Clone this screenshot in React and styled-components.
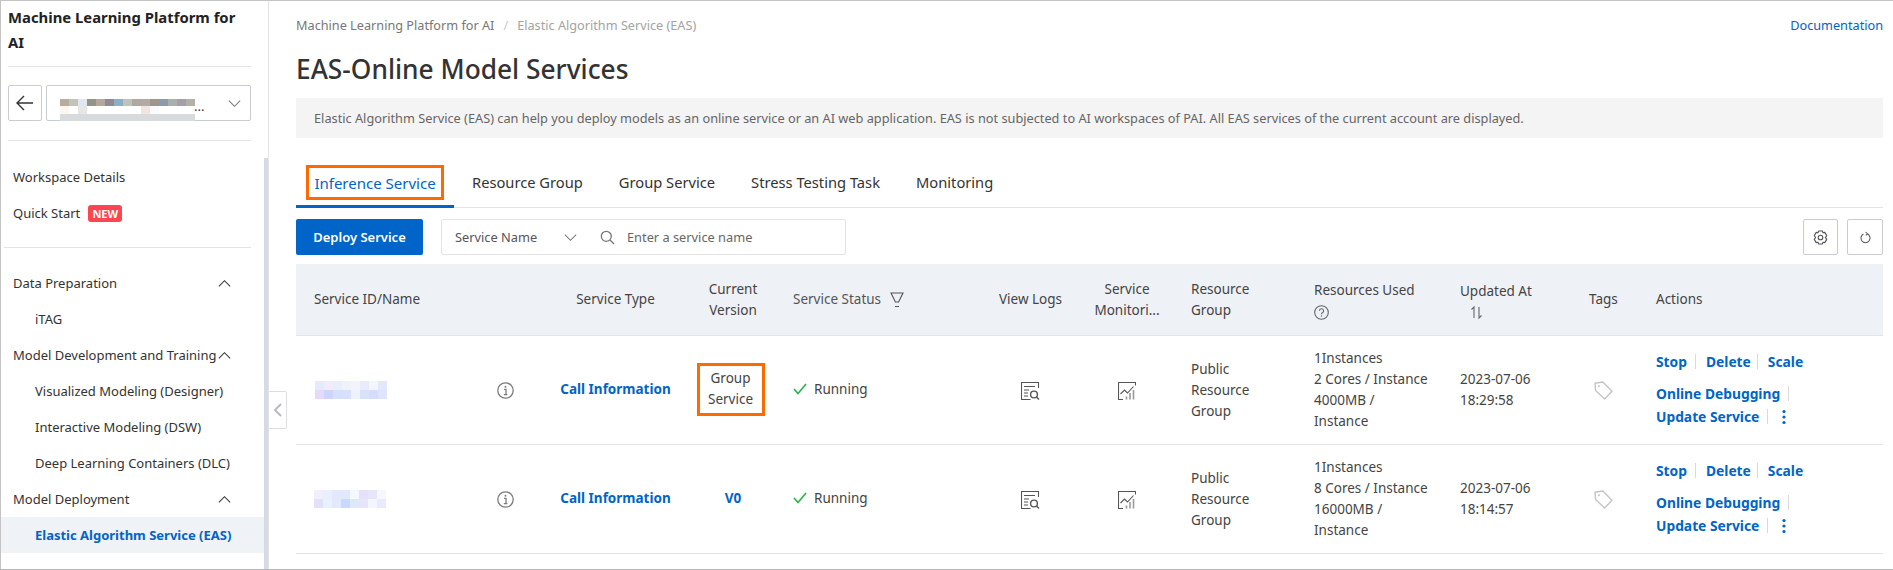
import React from "react";
import styled, { createGlobalStyle } from "styled-components";

const FONT = `"Noto Sans", "Open Sans", Arial, sans-serif`;
const COLUMNS = "244px 151px 84px 205px 101px 92px 123px 146px 129px 67px 245px";

const GlobalStyle = createGlobalStyle`
  html, body {
    margin: 0;
    padding: 0;
    background: #fff;
  }
  * {
    box-sizing: border-box;
  }
  body {
    font-family: ${FONT};
    font-size: 13.5px;
    color: #333;
  }
`;

const Frame = styled.div`
  position: relative;
  width: 1893px;
  height: 570px;
  overflow: hidden;
  display: flex;
  background: #fff;
  border-top: 1px solid #c4c4c4;
  border-left: 1px solid #c4c4c4;
  border-bottom: 1px solid #b8b8b8;
`;

const Sidebar = styled.aside`
  width: 268px;
  flex: none;
  display: flex;
  border-right: 1px solid #e3e4e6;
`;

const SideColumn = styled.div`
  width: 263px;
  flex: none;
`;

const ScrollTrack = styled.div`
  width: 4px;
  flex: none;
  padding-top: 157px;
  height: 100%;
`;

const ScrollThumb = styled.div`
  height: 100%;
  background: #d6dae3;
`;

const SideTitle = styled.div`
  margin: 4px 13px 0 7px;
  padding-bottom: 11px;
  font-size: 14.85px;
  font-weight: 700;
  line-height: 25px;
  color: #222;
  border-bottom: 1px solid #e3e4e6;
`;

const WorkspaceRow = styled.div`
  display: flex;
  gap: 4px;
  margin: 18px 13px 0 7px;
  padding-bottom: 19px;
  border-bottom: 1px solid #e3e4e6;
`;

const BackButton = styled.button`
  width: 34px;
  height: 36px;
  padding: 0;
  display: flex;
  align-items: center;
  justify-content: center;
  background: #fff;
  border: 1px solid #c9ccd2;
  border-radius: 2px;
  color: #333;
`;

const WorkspaceSelect = styled.div`
  flex: 1;
  height: 36px;
  display: flex;
  align-items: flex-start;
  padding: 13px 8px 0 13px;
  border: 1px solid #c9ccd2;
  border-radius: 2px;
`;

const Ellipsis = styled.span`
  font-size: 13px;
  line-height: 14px;
  color: #333;
  margin-left: -1px;
`;

const SelectCaret = styled.span`
  margin-left: auto;
  margin-top: -3px;
  color: #777;
  display: flex;
`;

const SideGroup = styled.div`
  margin: ${(p) => p.$top}px 0 0 3px;
  padding-bottom: ${(p) => p.$bottom}px;
  border-bottom: ${(p) => (p.$line ? "1px solid #e3e4e6" : "none")};
  width: 247px;
`;

const SideLink = styled.div`
  width: 263px;
  height: 36px;
  display: flex;
  align-items: center;
  justify-content: space-between;
  padding: 0 32px 0 ${(p) => (p.$sub ? 34 : 12)}px;
  margin-left: -3px;
  font-size: 13px;
  white-space: nowrap;
  font-weight: ${(p) => (p.$active ? 700 : 400)};
  color: ${(p) => (p.$active ? "#0064c8" : "#333")};
  background: ${(p) => (p.$active ? "#eff2f6" : "transparent")};
`;

const LinkGroup = styled.span`
  display: flex;
  align-items: center;
  gap: 8px;
`;

const NewBadge = styled.span`
  width: 34px;
  height: 17px;
  display: flex;
  align-items: center;
  justify-content: center;
  background: #ff4650;
  border-radius: 3px;
  color: #fff;
  font-size: 11px;
  font-weight: 700;
`;

const CollapseTab = styled.div`
  position: absolute;
  left: 268px;
  top: 390px;
  width: 18px;
  height: 38px;
  display: flex;
  align-items: center;
  justify-content: center;
  background: #fff;
  border: 1px solid #dcdde0;
  border-left: none;
  border-radius: 0 2px 2px 0;
  color: #b5b8be;
`;

const Main = styled.main`
  flex: 1;
  min-width: 0;
  padding: 14px 10px 0 27px;
`;

const TopBar = styled.div`
  height: 20px;
  display: flex;
  align-items: center;
  justify-content: space-between;
  font-size: 12.7px;
`;

const Crumbs = styled.div`
  display: flex;
  gap: 9px;
  color: #777;
`;

const CrumbSlash = styled.span`
  color: #c8c8c8;
`;

const CrumbLast = styled.span`
  color: #a3a3a3;
`;

const DocLink = styled.a`
  color: #0064c8;
`;

const PageTitle = styled.h1`
  margin: 17px 0 0;
  height: 34px;
  font-size: 26.3px;
  line-height: 34px;
  font-weight: 500;
  color: #333;
`;

const Notice = styled.div`
  margin-top: 12px;
  height: 40px;
  padding: 0 18px;
  display: flex;
  align-items: center;
  background: #f4f4f4;
  color: #666;
  font-size: 12.75px;
`;

const Tabs = styled.div`
  margin-top: 27px;
  display: flex;
  border-bottom: 1px solid #e3e4e6;
  height: 43px;
`;

const Tab = styled.div`
  padding: 0 18px;
  height: 35px;
  line-height: 35px;
  font-size: 14.7px;
  color: #333;
  white-space: nowrap;
`;

const ActiveTab = styled.div`
  width: 158px;
  height: 43px;
  padding: 0 10px;
  border-bottom: 3px solid #0064c8;
`;

const Highlight = styled.div`
  height: 35px;
  display: flex;
  align-items: center;
  justify-content: center;
  border: 3px solid #ff6a00;
  color: #0064c8;
  font-size: 15px;
  white-space: nowrap;
`;

const Toolbar = styled.div`
  margin-top: 11px;
  height: 36px;
  display: flex;
  gap: 18px;
`;

const PrimaryButton = styled.button`
  width: 127px;
  height: 36px;
  border: none;
  border-radius: 2px;
  background: #0064c8;
  color: #fff;
  font-family: ${FONT};
  font-size: 13px;
  font-weight: 600;
  padding: 0;
`;

const SearchBox = styled.div`
  width: 405px;
  height: 36px;
  display: flex;
  align-items: center;
  padding-left: 13px;
  border: 1px solid #e3e4e6;
  border-radius: 2px;
  font-size: 12.8px;
`;

const SearchField = styled.span`
  width: 108px;
  color: #555;
`;

const SearchCaret = styled.span`
  display: flex;
  width: 37px;
  color: #777;
`;

const SearchIcon = styled.span`
  display: flex;
  width: 27px;
  color: #777;
`;

const Placeholder = styled.span`
  color: #666;
`;

const ToolActions = styled.div`
  margin-left: auto;
  display: flex;
  gap: 9px;
`;

const IconButton = styled.button`
  width: ${(p) => p.$w}px;
  height: 36px;
  padding: 0;
  display: flex;
  align-items: center;
  justify-content: center;
  background: #fff;
  border: 1px solid #c9ccd2;
  border-radius: 2px;
  color: #555;
`;

const Row = styled.div`
  display: grid;
  grid-template-columns: ${COLUMNS};
  align-items: center;
  height: ${(p) => (p.$head ? "72px" : "109px")};
  margin-top: ${(p) => (p.$head ? "9px" : "0")};
  background: ${(p) => (p.$head ? "#eef1f6" : "#fff")};
  border-bottom: 1px solid #e3e4e6;
  font-size: 13.5px;
  line-height: 21px;
  color: #444;
`;

const Cell = styled.div`
  display: flex;
  flex-direction: column;
  min-width: 0;
  padding-left: ${(p) => (p.$center ? 0 : 18)}px;
  align-items: ${(p) => (p.$center ? "center" : "flex-start")};
  text-align: ${(p) => (p.$center ? "center" : "left")};
`;

const IdCell = styled.div`
  display: flex;
  align-items: center;
  justify-content: space-between;
  padding: 0 26px 0 18px;
  color: #7d7d7d;
`;

const StatusHead = styled.div`
  display: flex;
  align-items: center;
  gap: 9px;
  padding-left: 18px;
  color: #555;
`;

const Status = styled.div`
  display: flex;
  align-items: center;
  gap: 7px;
  padding-left: 18px;
  margin-top: -2px;
`;

const SmallIcon = styled.span`
  display: flex;
  margin-top: ${(p) => p.$top || 0}px;
  margin-left: ${(p) => p.$left || 0}px;
  color: ${(p) => p.$color || "#666"};
`;

const BlueBold = styled.a`
  color: #0064c8;
  font-weight: 700;
  white-space: nowrap;
`;

const CellLink = styled(BlueBold)`
  margin-top: -2px;
`;

const ActionLink = styled(BlueBold)`
  font-size: 13.8px;
`;

const Boxed = styled.div`
  width: 68px;
  height: 53px;
  margin: -2px 0 0 -5px;
  display: flex;
  align-items: center;
  justify-content: center;
  border: 3px solid #ff6a00;
  line-height: 21px;
  text-align: center;
  color: #444;
`;

const Actions = styled.div`
  display: flex;
  flex-direction: column;
  padding-left: 18px;
  margin-top: -2px;
`;

const ActionLine = styled.div`
  display: flex;
  align-items: center;
  height: 23px;
  margin-top: ${(p) => p.$top || 0}px;
`;

const Sep = styled.span`
  width: 1px;
  height: 15px;
  background: #d9dadd;
  margin: 0 ${(p) => p.$gap ?? 10}px 0 ${(p) => p.$left ?? 8}px;
`;

const Kebab = styled.span`
  display: flex;
  color: #0064c8;
  margin-left: 7px;
`;

const Mosaic = ({ cells, w, h, x = 0 }) => (
  <svg
    width={cells[0].length * w}
    height={cells.length * h}
    style={{ marginLeft: x, display: "block" }}
    shapeRendering="crispEdges"
  >
    {cells.map((row, r) =>
      row.map((c, i) => <rect key={`${r}-${i}`} x={i * w} y={r * h} width={w} height={h} fill={c} />)
    )}
  </svg>
);

const workspaceTiles = [
  ["#b8aca1", "#c3c4b9", "#dfe8f0", "#94938a", "#b4a89e", "#8f8a93", "#8aafcb", "#bfc2ba", "#aeaaa3", "#b4a9a6", "#a2958e", "#8b9cab", "#a9b1ac", "#a5a0a8", "#b2b1a5"],
  ["#fdf6ef", "#fff", "#e4e7e6", "#fff", "#fff", "#fff", "#fff", "#fff", "#fff", "#f2e5de", "#f8fcfe", "#fff", "#fff", "#fff", "#fff"],
  ["#d8dbdd", "#d8dbdd", "#d8dbdd", "#d8dbdd", "#d8dbdd", "#d8dbdd", "#d8dbdd", "#d8dbdd", "#d8dbdd", "#d8dbdd", "#d8dbdd", "#d8dbdd", "#d8dbdd", "#d8dbdd", "#d8dbdd"],
];
const firstId = [
  ["#e6ebfb", "#f2ecfa", "#e8effc", "#edf2fd", "#f3f3fc", "#e7ebfb", "#f3f6fe", "#e2e8fa"],
  ["#e4dafa", "#ced5fa", "#d6e0fb", "#d8e0fb", "#eef2fd", "#d9e2fb", "#d6dcfb", "#dde6fc"],
];
const secondId = [
  ["#f0effe", "#e8f0fe", "#e4e8fd", "#e1e9fd", "#f3f9fe", "#e6e1fb", "#e6e6fa", "#f8f6fe"],
  ["#e3e0fb", "#eaf1fe", "#e4e8fd", "#c8d9fc", "#dde8fd", "#e8e4fb", "#f3f6fe", "#eaeafc"],
];

const Caret = ({ up, size = 16 }) => (
  <svg style={{ flex: "none" }} width={size} height={size} viewBox="0 0 16 16" fill="none" stroke="currentColor" strokeWidth="1.1">
    <path d={up ? "M2 11 8 5l6 6" : "M2 5l6 6 6-6"} />
  </svg>
);

const InfoIcon = () => (
  <svg width="17" height="17" viewBox="0 0 17 17" fill="none" stroke="currentColor">
    <circle cx="8.5" cy="8.5" r="7.7" strokeWidth="1.3" />
    <path d="M7 7.3h2v5M6.8 12.6h3.6" strokeWidth="1.3" />
    <circle cx="8.5" cy="4.8" r="1" fill="currentColor" stroke="none" />
  </svg>
);

const LogIcon = () => (
  <svg width="19" height="18" viewBox="0 0 19 18" fill="none" stroke="#555" strokeWidth="1.1">
    <path d="M17.5 6V.5H.5v17h9" />
    <path d="M3 4.5h11M3 8h5M3 11h4M3 14h4" />
    <circle cx="13" cy="12.5" r="3.4" strokeWidth="1.4" />
    <path d="m15.5 15 2.5 2.5" strokeWidth="1.4" />
  </svg>
);

const ChartIcon = () => (
  <svg width="18" height="18" viewBox="0 0 18 18" fill="none" stroke="#555" strokeWidth="1.1">
    <path d="M5 17.5H.5V.5h17v3" />
    <path d="m2.5 12 4-4 3 3 6-6.5" />
    <path d="M8.5 17.5v-3M12 17.5V11M15.5 17.5V8" stroke="#9a9a9a" strokeWidth="1.6" />
  </svg>
);

const TagIcon = () => (
  <svg width="19" height="19" viewBox="0 0 19 19" fill="none" stroke="#c4c4c4" strokeWidth="1.4">
    <path d="M1 2.2 8.8 1 18 10.2 10.6 18 1.6 9.4Z" strokeLinejoin="round" />
    <circle cx="5" cy="5.2" r="1" fill="#c4c4c4" stroke="none" />
  </svg>
);

const ActionsBlock = () => (
  <Actions>
    <ActionLine>
      <ActionLink>Stop</ActionLink>
      <Sep />
      <ActionLink>Delete</ActionLink>
      <Sep $left={6} />
      <ActionLink>Scale</ActionLink>
    </ActionLine>
    <ActionLine $top={9}>
      <ActionLink>Online Debugging</ActionLink>
      <Sep />
    </ActionLine>
    <ActionLine>
      <ActionLink>Update Service</ActionLink>
      <Sep $gap={0} />
      <Kebab>
        <svg width="18" height="18" viewBox="0 0 18 18" fill="currentColor">
          <circle cx="9" cy="3.5" r="1.6" />
          <circle cx="9" cy="9" r="1.6" />
          <circle cx="9" cy="14.5" r="1.6" />
        </svg>
      </Kebab>
    </ActionLine>
  </Actions>
);

const services = [
  {
    cells: firstId,
    offset: 1,
    version: "group",
    cores: "2 Cores / Instance",
    memory: "4000MB /",
    date: "2023-07-06",
    time: "18:29:58",
  },
  {
    cells: secondId,
    offset: 0,
    version: "V0",
    cores: "8 Cores / Instance",
    memory: "16000MB /",
    date: "2023-07-06",
    time: "18:14:57",
  },
];

export default function App() {
  return (
    <>
      <GlobalStyle />
      <Frame>
        <Sidebar>
          <SideColumn>
            <SideTitle>Machine Learning Platform for AI</SideTitle>
            <WorkspaceRow>
              <BackButton aria-label="back">
                <svg width="20" height="18" viewBox="0 0 20 18" fill="none" stroke="currentColor" strokeWidth="1.4">
                  <path d="M18 9H2M9 2 2 9l7 7" />
                </svg>
              </BackButton>
              <WorkspaceSelect>
                <Mosaic cells={workspaceTiles} w={9} h={7.4} />
                <Ellipsis>...</Ellipsis>
                <SelectCaret>
                  <Caret size={15} />
                </SelectCaret>
              </WorkspaceSelect>
            </WorkspaceRow>
            <SideGroup $top={18} $bottom={16} $line>
              <SideLink>Workspace Details</SideLink>
              <SideLink>
                <LinkGroup>
                  Quick Start <NewBadge>NEW</NewBadge>
                </LinkGroup>
              </SideLink>
            </SideGroup>
            <SideGroup $top={17} $bottom={0}>
              <SideLink>
                Data Preparation <Caret up size={15} />
              </SideLink>
              <SideLink $sub>iTAG</SideLink>
              <SideLink>
                Model Development and Training<Caret up size={15} />
              </SideLink>
              <SideLink $sub>Visualized Modeling (Designer)</SideLink>
              <SideLink $sub>Interactive Modeling (DSW)</SideLink>
              <SideLink $sub>Deep Learning Containers (DLC)</SideLink>
              <SideLink>
                Model Deployment <Caret up size={15} />
              </SideLink>
              <SideLink $sub $active>
                Elastic Algorithm Service (EAS)
              </SideLink>
            </SideGroup>
          </SideColumn>
          <ScrollTrack>
            <ScrollThumb />
          </ScrollTrack>
        </Sidebar>
        <CollapseTab>
          <svg width="10" height="16" viewBox="0 0 10 16" fill="none" stroke="currentColor" strokeWidth="1.8">
            <path d="M8 2 2 8l6 6" />
          </svg>
        </CollapseTab>
        <Main>
          <TopBar>
            <Crumbs>
              <span>Machine Learning Platform for AI</span>
              <CrumbSlash>/</CrumbSlash>
              <CrumbLast>Elastic Algorithm Service (EAS)</CrumbLast>
            </Crumbs>
            <DocLink>Documentation</DocLink>
          </TopBar>
          <PageTitle>EAS-Online Model Services</PageTitle>
          <Notice>
            Elastic Algorithm Service (EAS) can help you deploy models as an online service or an AI web application.
            EAS is not subjected to AI workspaces of PAI. All EAS services of the current account are displayed.
          </Notice>
          <Tabs>
            <ActiveTab>
              <Highlight>Inference Service</Highlight>
            </ActiveTab>
            <Tab>Resource Group</Tab>
            <Tab>Group Service</Tab>
            <Tab>Stress Testing Task</Tab>
            <Tab>Monitoring</Tab>
          </Tabs>
          <Toolbar>
            <PrimaryButton>Deploy Service</PrimaryButton>
            <SearchBox>
              <SearchField>Service Name</SearchField>
              <SearchCaret>
                <Caret size={15} />
              </SearchCaret>
              <SearchIcon>
                <svg width="15" height="15" viewBox="0 0 15 15" fill="none" stroke="currentColor" strokeWidth="1.3">
                  <circle cx="6.3" cy="6.3" r="5" />
                  <path d="m10 10 4 4" />
                </svg>
              </SearchIcon>
              <Placeholder>Enter a service name</Placeholder>
            </SearchBox>
            <ToolActions>
              <IconButton $w={35} aria-label="settings">
                <svg width="15" height="15" viewBox="0 0 15 15" fill="none" stroke="currentColor" strokeWidth="1.1">
                  <path d="M5.6 1h3.8l.6 1.8 1.8-.4 1.9 3.2-1.3 1.9 1.3 1.9-1.9 3.2-1.8-.4-.6 1.8H5.6L5 12.2l-1.8.4L1.3 9.4l1.3-1.9-1.3-1.9 1.9-3.2 1.8.4Z" strokeLinejoin="round" />
                  <circle cx="7.5" cy="7.5" r="2.3" />
                </svg>
              </IconButton>
              <IconButton $w={36} aria-label="refresh">
                <svg width="11" height="13" viewBox="0 0 13 15" fill="none" stroke="currentColor" strokeWidth="1.2">
                  <path d="M4 3.4A5.4 5.4 0 1 0 9 3.4" />
                  <path d="M6.6 1 9 3.2 6.8 5" />
                </svg>
              </IconButton>
            </ToolActions>
          </Toolbar>

          <Row $head>
            <Cell>Service ID/Name</Cell>
            <Cell $center>Service Type</Cell>
            <Cell $center>
              Current
              <br />
              Version
            </Cell>
            <StatusHead>
              Service Status
              <SmallIcon $color="#555">
                <svg width="14" height="16" viewBox="0 0 14 16" fill="none" stroke="currentColor" strokeWidth="1.1">
                  <path d="M1 1h12L8.6 10H5.4ZM5 14.5h4" />
                </svg>
              </SmallIcon>
            </StatusHead>
            <Cell $center>View Logs</Cell>
            <Cell $center>
              Service
              <br />
              Monitori...
            </Cell>
            <Cell>
              Resource
              <br />
              Group
            </Cell>
            <Cell>
              Resources Used
              <SmallIcon $top={4}>
                <svg width="15" height="15" viewBox="0 0 15 15" fill="none" stroke="currentColor" strokeWidth="1.1">
                  <circle cx="7.5" cy="7.5" r="6.8" />
                  <path d="M5.4 5.8a2.1 2.1 0 1 1 3 2c-.6.3-.9.7-.9 1.4" />
                  <circle cx="7.5" cy="11" r=".7" fill="currentColor" stroke="none" />
                </svg>
              </SmallIcon>
            </Cell>
            <Cell>
              Updated At
              <SmallIcon $top={4} $left={10}>
                <svg width="13" height="13" viewBox="0 0 13 13" fill="none" stroke="currentColor" strokeWidth="1.1">
                  <path d="M4 12V1L1.5 3.5M9 1v11l2.5-2.5" />
                </svg>
              </SmallIcon>
            </Cell>
            <Cell>Tags</Cell>
            <Cell>Actions</Cell>
          </Row>

          {services.map((s) => (
            <Row key={s.time}>
              <IdCell>
                <Mosaic cells={s.cells} w={9} h={9} x={s.offset} />
                <InfoIcon />
              </IdCell>
              <Cell $center>
                <CellLink>Call Information</CellLink>
              </Cell>
              <Cell $center>
                {s.version === "group" ? (
                  <Boxed>
                    Group
                    <br />
                    Service
                  </Boxed>
                ) : (
                  <CellLink>{s.version}</CellLink>
                )}
              </Cell>
              <Status>
                <SmallIcon $color="#2ab24a">
                  <svg width="14" height="12" viewBox="0 0 14 12" fill="none" stroke="currentColor" strokeWidth="1.6">
                    <path d="m1 6 4 4.5L13 1" />
                  </svg>
                </SmallIcon>
                Running
              </Status>
              <Cell $center>
                <SmallIcon $top={1}>
                  <LogIcon />
                </SmallIcon>
              </Cell>
              <Cell $center>
                <SmallIcon $top={1}>
                  <ChartIcon />
                </SmallIcon>
              </Cell>
              <Cell>
                Public
                <br />
                Resource
                <br />
                Group
              </Cell>
              <Cell>
                1Instances
                <br />
                {s.cores}
                <br />
                {s.memory}
                <br />
                Instance
              </Cell>
              <Cell>
                {s.date}
                <br />
                {s.time}
              </Cell>
              <Cell>
                <SmallIcon $left={5}>
                  <TagIcon />
                </SmallIcon>
              </Cell>
              <ActionsBlock />
            </Row>
          ))}
        </Main>
      </Frame>
    </>
  );
}
